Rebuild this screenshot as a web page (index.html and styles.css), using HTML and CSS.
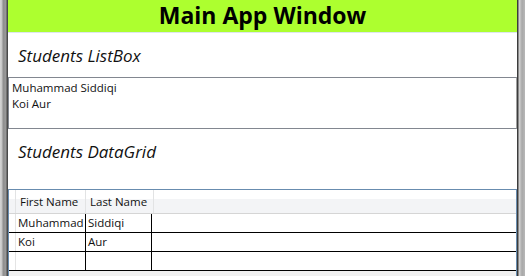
FILE: index.html
```html
<!DOCTYPE html>
<html lang="en">
<head>
    <meta charset="UTF-8">
    <title>Main App Window</title>
    <link rel="stylesheet" href="styles.css">
</head>
<body>
    <div class="window">
        <div class="frame-left"></div>
        <div class="content">
            <h1 class="title">Main App Window</h1>

            <h2 class="section">Students ListBox</h2>
            <ul class="listbox">
                <li>Muhammad Siddiqi</li>
                <li>Koi Aur</li>
            </ul>

            <h2 class="section grid-title">Students DataGrid</h2>
            <div class="datagrid">
                <div class="grid-row grid-head">
                    <div class="row-header"></div>
                    <div class="cell first">First Name</div>
                    <div class="cell last">Last Name</div>
                    <div class="cell fill"></div>
                </div>
                <div class="grid-row">
                    <div class="row-header"></div>
                    <div class="cell first">Muhammad</div>
                    <div class="cell last">Siddiqi</div>
                    <div class="cell fill"></div>
                </div>
                <div class="grid-row">
                    <div class="row-header"></div>
                    <div class="cell first">Koi</div>
                    <div class="cell last">Aur</div>
                    <div class="cell fill"></div>
                </div>
                <div class="grid-row">
                    <div class="row-header"></div>
                    <div class="cell first"></div>
                    <div class="cell last"></div>
                    <div class="cell fill"></div>
                </div>
                <div class="grid-empty"></div>
            </div>
        </div>
        <div class="frame-right"></div>
    </div>
</body>
</html>
```

FILE: styles.css
```css
body {
    margin: 0;
    font-family: "Open Sans", "Liberation Sans", sans-serif;
    color: #000;
    overflow: hidden;
}

.window {
    display: flex;
    width: 525px;
    height: 276px;
}

.frame-left {
    width: 8px;
    background: linear-gradient(to right, #d6d6d6 0, #c4c4c4 2px, #8e8e8e 3px, #9a9a9a 6px, #4a4a4a 7px, #4a4a4a 8px);
}

.frame-right {
    width: 8px;
    background: linear-gradient(to right, #3c3c3c 0, #3c3c3c 1px, #d8d8d8 2px, #a8a8a8 5px, #b8b8b8 8px);
}

.content {
    flex: 1;
    display: flex;
    flex-direction: column;
    background-color: white;
    overflow: hidden;
}

.title {
    margin: 0;
    height: 32px;
    line-height: 31px;
    background-color: #adff2f;
    border-bottom: 1px solid #dde6ee;
    text-align: center;
    font-size: 23px;
    font-weight: bold;
}

.section {
    margin: 0;
    height: 44px;
    line-height: 45px;
    padding-left: 10px;
    font-size: 17px;
    font-weight: normal;
    font-style: italic;
    color: #111;
}

.grid-title {
    height: 60px;
    line-height: 46px;
}

.listbox {
    list-style: none;
    margin: 0;
    padding: 2px 3px;
    height: 46px;
    border: 1px solid #828790;
    border-right-color: #a0a0a0;
    font-size: 11.5px;
    line-height: 16px;
    color: #111;
}

.datagrid {
    flex: 1;
    display: flex;
    flex-direction: column;
    border: 1px solid #688caf;
    border-bottom: none;
    font-size: 11.5px;
    color: #111;
}

.grid-row {
    display: flex;
    height: 18px;
    border-bottom: 1px solid #000;
}

.grid-row .row-header {
    width: 6px;
    border-right: 1px solid #e4e4e4;
}

.grid-row .cell {
    padding-left: 2px;
    line-height: 18px;
    white-space: nowrap;
}

.grid-row .first {
    width: 67px;
    border-right: 1px solid #000;
}

.grid-row .last {
    width: 63px;
    border-right: 1px solid #000;
}

.grid-row .fill {
    flex: 1;
}

.grid-head {
    height: 23px;
    border-bottom: 1px solid #d5d5d5;
    background: linear-gradient(to bottom, #ffffff 0, #ffffff 9px, #f3f4f6 9px, #f3f4f6 100%);
}

.grid-head .cell {
    line-height: 23px;
    padding-left: 4px;
}

.grid-head .first {
    width: 65px;
    border-right-color: #e2e3e4;
}

.grid-head .last {
    border-right-color: #e2e3e4;
}

.grid-head .row-header {
    border-right-color: #e2e3e4;
}

.grid-empty {
    flex: 1;
    background-color: #f0f0f0;
}
```
